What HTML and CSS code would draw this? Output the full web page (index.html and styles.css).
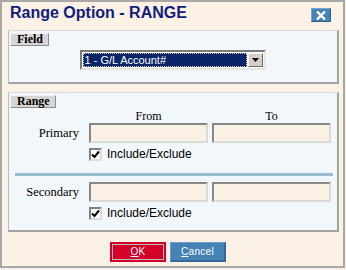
FILE: index.html
```html
<!DOCTYPE html>
<html>
<head>
<meta charset="utf-8">
<link rel="stylesheet" href="styles.css">
</head>
<body>
<div class="window">
  <div class="titlebar">
    <div class="title">Range Option - RANGE</div>
    <div class="close"><svg width="10" height="9" viewBox="0 0 10 9"><path d="M1 0.5 L9 8.5 M9 0.5 L1 8.5" stroke="#fff" stroke-width="2.4" fill="none"/></svg></div>
  </div>

  <div class="panel field-panel">
    <div class="tag">Field</div>
    <div class="select">
      <div class="select-value"><span>1 - G/L Account#</span></div>
      <div class="select-arrow"><svg width="7" height="4" viewBox="0 0 7 4"><path d="M0 0 H7 L3.5 4 Z" fill="#000"/></svg></div>
    </div>
  </div>

  <div class="panel range-panel">
    <div class="tag">Range</div>
    <div class="grid first">
      <div></div><div class="head">From</div><div class="head">To</div>
      <div class="lbl">Primary</div><div class="input"></div><div class="input"></div>
      <div class="check-row">
        <span class="checkbox"><svg width="9" height="9" viewBox="0 0 9 9"><path d="M1 4.5 L3.5 7 L8 1.5" stroke="#000" stroke-width="2" fill="none"/></svg></span>
        <span class="check-text">Include/Exclude</span>
      </div>
    </div>
    <div class="sep"></div>
    <div class="grid second">
      <div class="lbl">Secondary</div><div class="input"></div><div class="input"></div>
      <div class="check-row">
        <span class="checkbox"><svg width="9" height="9" viewBox="0 0 9 9"><path d="M1 4.5 L3.5 7 L8 1.5" stroke="#000" stroke-width="2" fill="none"/></svg></span>
        <span class="check-text">Include/Exclude</span>
      </div>
    </div>
  </div>

  <div class="buttons">
    <div class="btn btn-ok"><span><u>O</u>K</span></div>
    <div class="btn btn-cancel"><span><u>C</u>ancel</span></div>
  </div>
</div>
</body>
</html>
```

FILE: styles.css
```css
html, body {
  margin: 0;
  padding: 0;
  background: #f7efe5;
}

.window {
  box-sizing: border-box;
  width: 345px;
  height: 268px;
  border: 2px solid #a8a8a8;
  background: #fbf1e4;
  font-family: "Liberation Sans", Arial, sans-serif;
}

.titlebar {
  height: 28px;
  display: flex;
  justify-content: space-between;
  align-items: flex-start;
  padding-left: 8px;
}

.title {
  margin-top: 1px;
  font: bold 16px/20px "Liberation Sans", Arial, sans-serif;
  color: #0f1d7b;
}

.close {
  box-sizing: border-box;
  width: 20px;
  height: 14px;
  margin-top: 6px;
  margin-right: 12px;
  background: #4682b4;
  border: 1px solid;
  border-color: #78a6d2 #2f5f8f #2f5f8f #78a6d2;
  display: flex;
  align-items: center;
  justify-content: center;
}

.close svg { display: block; }

.panel {
  margin: 0 4px 0 6px;
  background: #f2f7fb;
  border-style: solid;
  border-width: 1px 2px 2px 1px;
  border-color: #d6d9dc #a3a3a3 #a3a3a3 #b9bcbf;
  padding-top: 2px;
  padding-left: 1px;
}

.field-panel {
  padding-bottom: 12px;
}

.range-panel {
  margin-top: 8px;
  padding-bottom: 10px;
}

.tag {
  display: block;
  width: max-content;
  box-sizing: border-box;
  height: 13px;
  padding: 0 5px 0 6px;
  font: bold 12px/11px "Liberation Serif", "Times New Roman", serif;
  color: #000;
  background: #d6d6d6;
  border: 1px solid;
  border-color: #f4f4f4 #8c8c8c #8c8c8c #f4f4f4;
}

.select {
  box-sizing: border-box;
  width: 186px;
  height: 20px;
  margin: 4px auto 0;
  position: relative;
  left: -1px;
  border: 2px solid;
  border-color: #7c7c7c #e6e6e6 #e6e6e6 #7c7c7c;
  background: #fff;
  display: flex;
  padding: 1px;
  gap: 1px;
}

.select-value {
  flex: 1;
  background: #0a246a;
  border: 1px dotted #d9c98a;
  color: #fff;
  font: 11px/12px "Liberation Sans", Arial, sans-serif;
  padding-left: 1px;
  white-space: nowrap;
  overflow: hidden;
}

.select-arrow {
  box-sizing: border-box;
  width: 15px;
  background: #d4d0c8;
  border: 1px solid;
  border-color: #f4f4f4 #6a6a6a #6a6a6a #f4f4f4;
  display: flex;
  align-items: center;
  justify-content: center;
}

.select-arrow svg { display: block; }

.grid {
  display: grid;
  grid-template-columns: 75px 119px 119px;
  column-gap: 4px;
  align-items: center;
}

.grid.first { margin-top: 1px; grid-template-rows: 14px 20px auto; }
.grid.second { margin-top: 6px; grid-template-rows: 20px auto; }

.head {
  text-align: center;
  font: 12px/14px "Liberation Serif", "Times New Roman", serif;
  color: #000;
}

.lbl {
  text-align: right;
  padding-right: 6px;
  font: 12.5px/20px "Liberation Serif", "Times New Roman", serif;
  color: #000;
}

.input {
  box-sizing: border-box;
  height: 20px;
  background: #fbf1e4;
  border: 2px solid;
  border-color: #878787 #dadada #dadada #878787;
}

.check-row {
  grid-column: 2 / 4;
  margin-top: 5px;
  display: flex;
  align-items: center;
  height: 13px;
}

.checkbox {
  box-sizing: border-box;
  width: 13px;
  height: 13px;
  background: #fff;
  border: 2px solid;
  border-color: #808080 #dcdcdc #dcdcdc #808080;
  display: flex;
  align-items: center;
  justify-content: center;
}

.checkbox svg { display: block; }

.check-text {
  margin-left: 5px;
  font: 12px/13px "Liberation Sans", Arial, sans-serif;
  color: #000;
}

.sep {
  height: 3px;
  margin: 12px 4px 0 5px;
  background: #9bbbcf;
}

.buttons {
  display: flex;
  gap: 4px;
  margin-top: 10px;
  padding-left: 108px;
}

.btn {
  box-sizing: border-box;
  width: 56px;
  height: 20px;
  display: flex;
  align-items: center;
  justify-content: center;
  font: 10px/12px "Liberation Sans", Arial, sans-serif;
  color: #fff;
  letter-spacing: 0.3px;
}

.btn-ok {
  background: #d4002a;
  border: 2px solid #d4002a;
  outline: 1px solid #b8b8b8;
  outline-offset: -3px;
}

.btn-cancel {
  background: #4682b4;
  border-style: solid;
  border-width: 1px 2px 2px 1px;
  border-color: #6c9ccb #35679a #35679a #6c9ccb;
}
```
